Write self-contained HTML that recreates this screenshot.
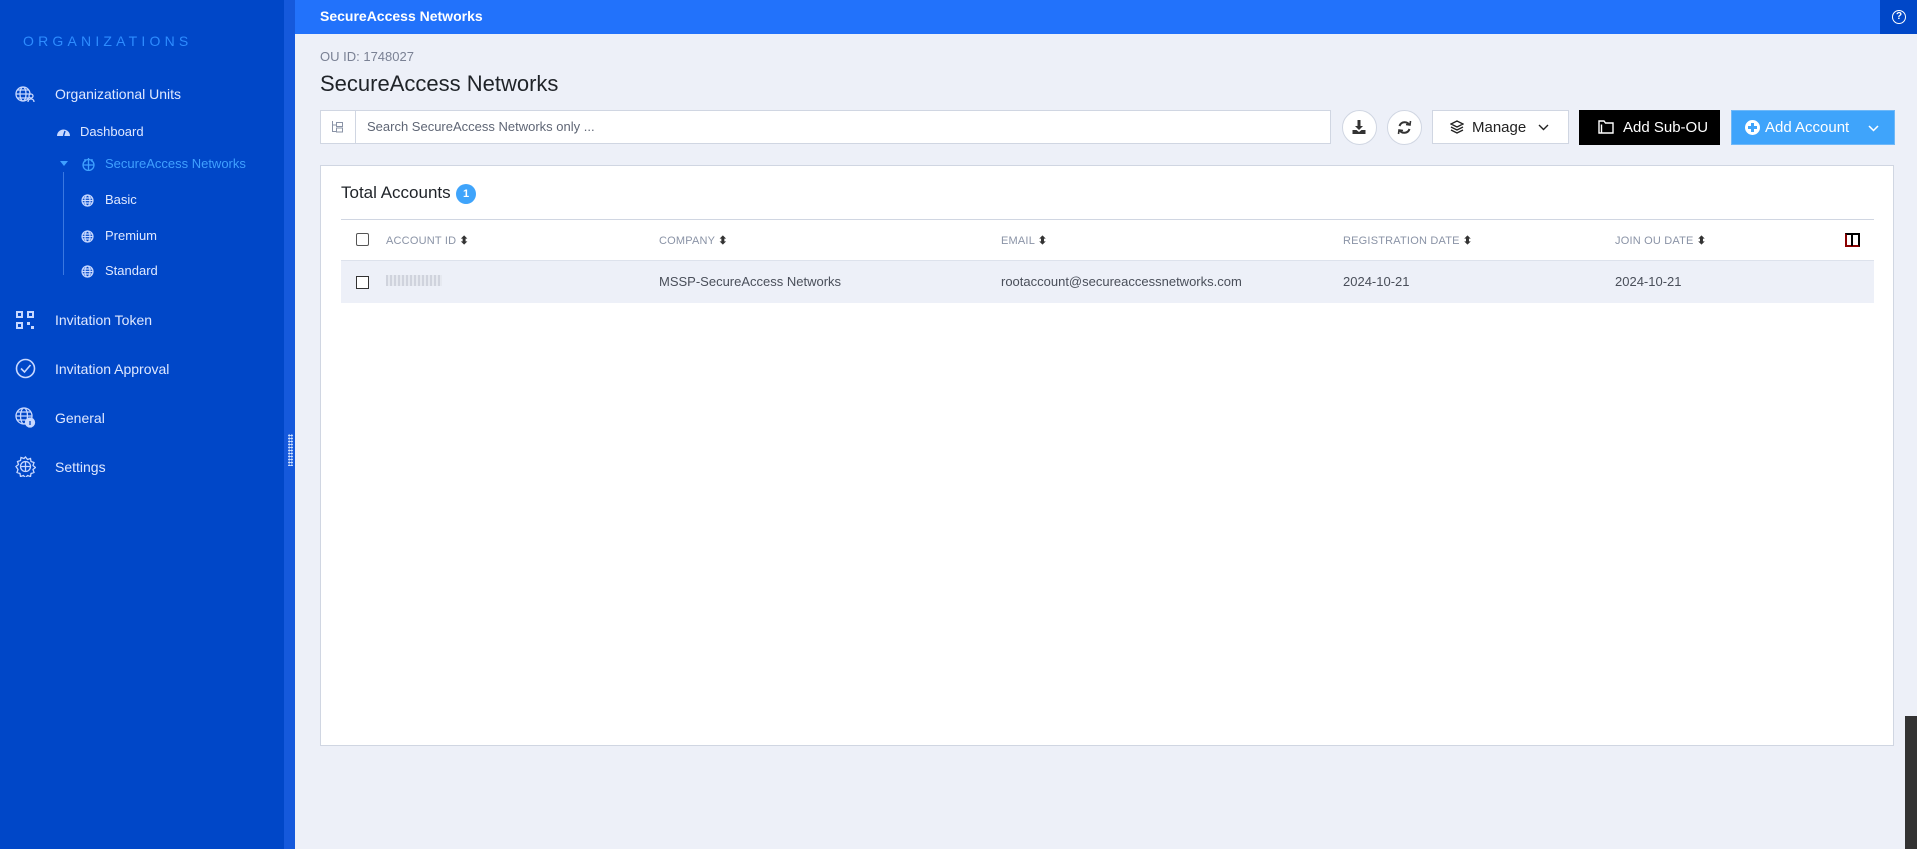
<!DOCTYPE html>
<html><head><meta charset="utf-8"><style>
*{margin:0;padding:0;box-sizing:border-box}
body{width:1917px;height:849px;overflow:hidden;background:#edf0f8;font-family:"Liberation Sans",sans-serif;position:relative}
.a{position:absolute;white-space:nowrap}
#sb{left:0;top:0;width:284px;height:849px;background:#0047c8}
#strip{left:284px;top:0;width:11px;height:849px;background:#1559dc}
.si{color:#dfe8ff;font-size:14px}
.ic{position:absolute}
.hd{color:#8a93a6;font-size:11px;letter-spacing:.2px}
.td{color:#4a4f5a;font-size:13px}
.btn{position:absolute;top:110px;height:34px;border:1px solid #d0d6e2;background:#fff}
</style></head><body>
<div class="a" id="sb"></div>
<div class="a" id="strip"></div>
<div class="a" style="left:288px;top:434px;width:5px;height:32px;background-image:radial-gradient(circle,#cfe0ff 1px,transparent 1.2px);background-size:2.5px 3px"></div>

<div class="a" style="left:23px;top:33px;color:#2d8cff;font-size:14px;letter-spacing:4.2px">ORGANIZATIONS</div>

<svg class="ic" style="left:15px;top:85px" width="22" height="18" viewBox="0 0 22 18" fill="none" stroke="#c8d8ff" stroke-width="1.3"><circle cx="8" cy="9" r="7"/><ellipse cx="8" cy="9" rx="3" ry="7"/><path d="M1 9h14M2 5h12M2 13h12"/><circle cx="16" cy="11" r="2" fill="#0047c8"/><path d="M13 17c0-2 1.5-3 3-3s3 1 3 3"/></svg>
<div class="a si" style="left:55px;top:86px">Organizational Units</div>

<svg class="ic" style="left:56px;top:125px" width="15" height="12" viewBox="0 0 15 12"><path d="M1 11A6.5 6.5 0 0 1 14 11Z" fill="#c8d8ff"/><path d="M7.5 11L9 6" stroke="#0047c8" stroke-width="1.4"/></svg>
<div class="a si" style="left:80px;top:124px;font-size:13px">Dashboard</div>

<div class="a" style="left:60px;top:161px;width:0;height:0;border-left:4px solid transparent;border-right:4px solid transparent;border-top:5px solid #3fa0ff"></div>
<svg class="ic" style="left:82px;top:157px" width="13" height="14" viewBox="0 0 13 14" fill="none" stroke="#3fa0ff" stroke-width="1.3"><circle cx="6.5" cy="8" r="5.5"/><path d="M1 8h11M6.5 2.5v11M3 2v3M6.5 1v2M10 2v3"/></svg>
<div class="a" style="left:105px;top:156px;color:#3fa0ff;font-size:13px">SecureAccess Networks</div>
<div class="a" style="left:63px;top:172px;width:1px;height:103px;background:#3a78e0"></div>

<svg class="ic" style="left:81px;top:194px" width="13" height="13" viewBox="0 0 13 13" fill="none" stroke="#c8d8ff" stroke-width="1.2"><circle cx="6.5" cy="6.5" r="5.5"/><ellipse cx="6.5" cy="6.5" rx="2.5" ry="5.5"/><path d="M1 6.5h11M2 4h9M2 9h9"/></svg>
<div class="a si" style="left:105px;top:192px;font-size:13px">Basic</div>
<svg class="ic" style="left:81px;top:230px" width="13" height="13" viewBox="0 0 13 13" fill="none" stroke="#c8d8ff" stroke-width="1.2"><circle cx="6.5" cy="6.5" r="5.5"/><ellipse cx="6.5" cy="6.5" rx="2.5" ry="5.5"/><path d="M1 6.5h11M2 4h9M2 9h9"/></svg>
<div class="a si" style="left:105px;top:228px;font-size:13px">Premium</div>
<svg class="ic" style="left:81px;top:265px" width="13" height="13" viewBox="0 0 13 13" fill="none" stroke="#c8d8ff" stroke-width="1.2"><circle cx="6.5" cy="6.5" r="5.5"/><ellipse cx="6.5" cy="6.5" rx="2.5" ry="5.5"/><path d="M1 6.5h11M2 4h9M2 9h9"/></svg>
<div class="a si" style="left:105px;top:263px;font-size:13px">Standard</div>

<svg class="ic" style="left:16px;top:311px" width="19" height="19" viewBox="0 0 19 19" fill="#c8d8ff"><rect x="0" y="0" width="7" height="7"/><rect x="2" y="2" width="3" height="3" fill="#0047c8"/><rect x="11" y="0" width="7" height="7"/><rect x="13" y="2" width="3" height="3" fill="#0047c8"/><rect x="0" y="11" width="7" height="7"/><rect x="2" y="13" width="3" height="3" fill="#0047c8"/><rect x="11" y="11" width="3" height="3"/><rect x="15" y="15" width="3" height="3"/></svg>
<div class="a si" style="left:55px;top:312px">Invitation Token</div>

<svg class="ic" style="left:15px;top:358px" width="21" height="21" viewBox="0 0 21 21" fill="none" stroke="#c8d8ff" stroke-width="1.6"><circle cx="10.5" cy="10.5" r="9"/><path d="M6 10.5l3.5 3.5 6-7"/></svg>
<div class="a si" style="left:55px;top:361px">Invitation Approval</div>

<svg class="ic" style="left:15px;top:407px" width="21" height="21" viewBox="0 0 21 21" fill="none" stroke="#c8d8ff" stroke-width="1.3"><circle cx="9" cy="9" r="8"/><ellipse cx="9" cy="9" rx="3.5" ry="8"/><path d="M1 9h16M2 5h14M2 13h14"/><circle cx="15" cy="15.5" r="4.5" fill="#c8d8ff"/><path d="M15 14v4" stroke="#0047c8"/></svg>
<div class="a si" style="left:55px;top:410px">General</div>

<svg class="ic" style="left:15px;top:456px" width="21" height="21" viewBox="0 0 21 21" fill="none" stroke="#c8d8ff" stroke-width="1.3"><path d="M10.5 1l2 2.5 3-1 .5 3 3 1-1 3 2.5 2-2.5 2 1 3-3 1-.5 3-3-1-2 2.5-2-2.5-3 1-.5-3-3-1 1-3L1 10.5l2.5-2-1-3 3-1 .5-3 3 1z"/><circle cx="10.5" cy="10.5" r="5"/><path d="M5.5 10.5h10M10.5 5.5v10"/></svg>
<div class="a si" style="left:55px;top:459px">Settings</div>

<div class="a" style="left:295px;top:0;width:1585px;height:34px;background:#2272fb"></div>
<div class="a" style="left:320px;top:8px;color:#fff;font-size:14px;font-weight:bold">SecureAccess Networks</div>
<div class="a" style="left:1880px;top:0;width:37px;height:34px;background:#0047c8"></div>
<div class="a" style="left:1892px;top:10px;width:14px;height:14px;border:1.5px solid #fff;border-radius:50%;color:#fff;font-size:10px;font-weight:bold;text-align:center;line-height:11px">?</div>

<div class="a" style="left:320px;top:49px;color:#7a8194;font-size:13px">OU ID: 1748027</div>
<div class="a" style="left:320px;top:71px;color:#1f2328;font-size:22px">SecureAccess Networks</div>

<div class="btn" style="left:320px;width:1011px"></div>
<div class="a" style="left:355px;top:111px;width:1px;height:32px;background:#d0d6e2"></div>
<svg class="ic" style="left:331px;top:120px" width="13" height="13" viewBox="0 0 13 13" fill="none" stroke="#8a93a6" stroke-width="1"><path d="M1.5 1v10.5h4M1.5 5h4"/><rect x="5.5" y="2.5" width="6" height="4"/><rect x="5.5" y="8" width="6" height="4"/></svg>
<div class="a" style="left:367px;top:119px;color:#5f6675;font-size:13px">Search SecureAccess Networks only ...</div>

<div class="a" style="left:1342px;top:110px;width:35px;height:35px;border:1px solid #d0d6e2;border-radius:50%;background:#fff"></div>
<svg class="ic" style="left:1351px;top:119px" width="16" height="16" viewBox="0 0 16 16" fill="#333"><path d="M6.5 1h3v6h2.5L8 11 4 7h2.5z"/><path d="M1.5 11h4l2.5 2 2.5-2h4v4h-13z"/></svg>
<div class="a" style="left:1387px;top:110px;width:35px;height:35px;border:1px solid #d0d6e2;border-radius:50%;background:#fff"></div>
<svg class="ic" style="left:1397px;top:119px" width="15" height="17" viewBox="0 0 15 17" fill="none" stroke="#333" stroke-width="2"><path d="M12.5 6A5.5 5.5 0 0 0 2.5 7M2.5 11a5.5 5.5 0 0 0 10-1"/><path d="M9 5.5l4 .5.5-4M6 11.5l-4-.5-.5 4" stroke-width="1.6"/></svg>

<div class="btn" style="left:1432px;width:137px"></div>
<svg class="ic" style="left:1450px;top:120px" width="14" height="14" viewBox="0 0 14 14" fill="none" stroke="#222" stroke-width="1.3"><path d="M7 1L1 4l6 3 6-3zM1 7l6 3 6-3M1 10l6 3 6-3"/></svg>
<div class="a" style="left:1472px;top:119px;color:#222;font-size:15px">Manage</div>
<svg class="ic" style="left:1538px;top:124px" width="11" height="7" viewBox="0 0 11 7" fill="none" stroke="#222" stroke-width="1.4"><path d="M1 1l4.5 4.5L10 1"/></svg>

<div class="a" style="left:1579px;top:110px;width:141px;height:35px;background:#000"></div>
<svg class="ic" style="left:1598px;top:120px" width="16" height="14" viewBox="0 0 16 14" fill="none" stroke="#fff" stroke-width="1.4"><path d="M1 1h5l1.5 2H15v10H1z"/><path d="M3.5 4.5V13"/></svg>
<div class="a" style="left:1623px;top:119px;color:#fff;font-size:15px">Add Sub-OU</div>

<div class="a" style="left:1731px;top:110px;width:164px;height:35px;background:#3fa4fb;border:1px solid #6fb8f8"></div>
<div class="a" style="left:1745px;top:120px;width:15px;height:15px;border-radius:50%;background:#fff"></div>
<div class="a" style="left:1748px;top:126px;width:9px;height:3px;background:#3fa4fb"></div>
<div class="a" style="left:1751px;top:123px;width:3px;height:9px;background:#3fa4fb"></div>
<div class="a" style="left:1765px;top:119px;color:#fff;font-size:15px">Add Account</div>
<svg class="ic" style="left:1868px;top:125px" width="11" height="7" viewBox="0 0 11 7" fill="none" stroke="#fff" stroke-width="1.5"><path d="M1 1l4.5 4.5L10 1"/></svg>

<div class="a" style="left:320px;top:165px;width:1574px;height:581px;background:#fff;border:1px solid #d0d6e2"></div>
<div class="a" style="left:341px;top:183px;color:#1f2328;font-size:17px">Total Accounts</div>
<div class="a" style="left:456px;top:184px;width:20px;height:20px;border-radius:50%;background:#3fa4fb;color:#fff;font-size:11px;font-weight:bold;text-align:center;line-height:20px">1</div>
<div class="a" style="left:341px;top:219px;width:1533px;height:1px;background:#d0d6e2"></div>
<div class="a" style="left:356px;top:233px;width:13px;height:13px;border:1px solid #555;border-radius:2px;background:#fff"></div>
<div class="a hd" style="left:386px;top:234px">ACCOUNT ID <b style="color:#333">⬍</b></div>
<div class="a hd" style="left:659px;top:234px">COMPANY <b style="color:#333">⬍</b></div>
<div class="a hd" style="left:1001px;top:234px">EMAIL <b style="color:#333">⬍</b></div>
<div class="a hd" style="left:1343px;top:234px">REGISTRATION DATE <b style="color:#333">⬍</b></div>
<div class="a hd" style="left:1615px;top:234px">JOIN OU DATE <b style="color:#333">⬍</b></div>
<div class="a" style="left:1845px;top:233px;width:15px;height:14px;border:2px solid #000;border-left-color:#8b0000;border-bottom-color:#8b0000"><div style="position:absolute;left:4px;top:-1px;width:2px;height:12px;background:#000"></div></div>
<div class="a" style="left:341px;top:260px;width:1533px;height:1px;background:#dde2ec"></div>
<div class="a" style="left:341px;top:261px;width:1533px;height:42px;background:#edf0f8"></div>
<div class="a" style="left:356px;top:276px;width:13px;height:13px;border:1px solid #333;border-left-width:1.5px;background:#fff"></div>
<div class="a" style="left:386px;top:275px;width:56px;height:11px;background:repeating-linear-gradient(90deg,#c8ccd6 0 2px,#e4e7ee 2px 4px);opacity:.8"></div>
<div class="a td" style="left:659px;top:274px">MSSP-SecureAccess Networks</div>
<div class="a td" style="left:1001px;top:274px">rootaccount@secureaccessnetworks.com</div>
<div class="a td" style="left:1343px;top:274px">2024-10-21</div>
<div class="a td" style="left:1615px;top:274px">2024-10-21</div>

<div class="a" style="left:1905px;top:716px;width:12px;height:133px;background:#333"></div>
</body></html>
